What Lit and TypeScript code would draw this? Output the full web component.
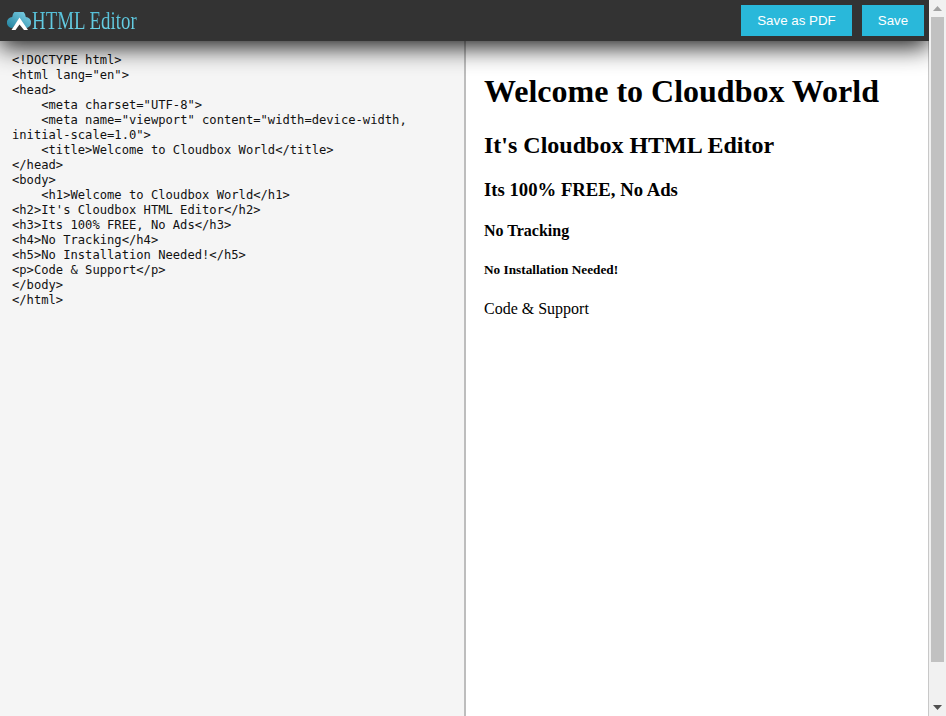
import { LitElement, html, css } from "lit";
import { customElement } from "lit/decorators.js";

const CODE = `<!DOCTYPE html>
<html lang="en">
<head>
    <meta charset="UTF-8">
    <meta name="viewport" content="width=device-width,
initial-scale=1.0">
    <title>Welcome to Cloudbox World</title>
</head>
<body>
    <h1>Welcome to Cloudbox World</h1>
<h2>It's Cloudbox HTML Editor</h2>
<h3>Its 100% FREE, No Ads</h3>
<h4>No Tracking</h4>
<h5>No Installation Needed!</h5>
<p>Code & Support</p>
</body>
</html>`;

@customElement("app-root")
export class AppRoot extends LitElement {
  static styles = css`
    :host { display: flex; width: 946px; height: 716px; overflow: hidden; background: #fff; }
    .page { flex: 1; min-width: 0; display: flex; flex-direction: column; }
    .bar {
      position: relative; z-index: 2;
      height: 41px; flex: none; background: #333;
      display: flex; align-items: flex-start; justify-content: space-between;
      box-shadow: 0 6px 24px rgba(0,0,0,.9);
    }
    .logo { display: flex; align-items: flex-start; height: 41px; padding: 12px 0 0 7px; box-sizing: border-box; gap: 1px; }
    .logo svg { display: block; flex: none; }
    .logo span {
      display: block; white-space: nowrap;
      font: 25px/18px "Liberation Serif", serif;
      padding-bottom: 3px;
      transform: scaleX(.755); transform-origin: left top;
      background: linear-gradient(#55bfd8, #6fd6ea);
      -webkit-background-clip: text; background-clip: text; color: transparent;
    }
    .actions { display: flex; gap: 10px; padding: 5px 5px 0 0; }
    button {
      height: 31px; border: 0; background: #29b8da; color: #fff; padding: 0;
      font: 13.33px "Liberation Sans", Arial, sans-serif;
    }
    .pdf { width: 111px; }
    .save { width: 62px; }
    .panes { flex: 1; min-height: 0; display: flex; }
    .code {
      width: 466px; flex: none; box-sizing: border-box; margin: 0;
      background: #f5f5f5; border-right: 2px solid #bdbdbd;
      padding: 12px 12px 0; overflow: hidden;
      font: 12.15px/15px "DejaVu Sans Mono", monospace; color: #111;
      white-space: pre-wrap;
    }
    .view { flex: 1; min-width: 0; padding: 11px 18px 0; color: #000; font-family: "Liberation Serif", "Times New Roman", serif; border-right: 1px solid #c8c8c8; }
    .view h1 { font-size: 32px; margin: 21.44px 0; }
    .view h2 { font-size: 24px; margin: 19.92px 0; }
    .view h3 { font-size: 18.72px; margin: 18.72px 0; }
    .view h4 { font-size: 16px; margin: 21.28px 0; }
    .view h5 { font-size: 13.28px; margin: 22.18px 0; }
    .view p { font-size: 16px; margin: 16px 0; }
    .scroll { position: relative; z-index: 3; width: 17px; flex: none; background: #f1f1f1; display: flex; flex-direction: column; }
    .arrow { height: 17px; flex: none; display: flex; align-items: center; justify-content: center; }
    .track { flex: 1; min-height: 0; padding: 0 2px; display: flex; flex-direction: column; }
    .thumb { height: 645px; background: #c1c1c1; }
  `;

  render() {
    return html`
      <div class="page">
        <header class="bar">
          <div class="logo">
            <svg width="24" height="18" viewBox="0 0 24 18" aria-hidden="true">
              <defs>
                <linearGradient id="lg" x1="0" y1="1" x2="1" y2="0">
                  <stop offset="0" stop-color="#1f7f9c"/><stop offset="1" stop-color="#8adcf0"/>
                </linearGradient>
              </defs>
              <path fill="url(#lg)" d="M5.500 16A5.500 5.500 0 0 1 5.200 5A6.800 6.800 0 0 1 18.800 5A5.500 5.500 0 0 1 18.500 16L12.500 7Z"/>
              <path fill="#fff" d="M12.500 5.500L21 18H17L12.500 12.500L8.500 18H4.500Z"/>
            </svg>
            <span>HTML Editor</span>
          </div>
          <div class="actions">
            <button class="pdf">Save as PDF</button>
            <button class="save">Save</button>
          </div>
        </header>
        <div class="panes">
          <pre class="code">${CODE}</pre>
          <div class="view">
            <h1>Welcome to Cloudbox World</h1>
            <h2>It's Cloudbox HTML Editor</h2>
            <h3>Its 100% FREE, No Ads</h3>
            <h4>No Tracking</h4>
            <h5>No Installation Needed!</h5>
            <p>Code &amp; Support</p>
          </div>
        </div>
      </div>
      <div class="scroll">
        <div class="arrow"><svg width="9" height="5" viewBox="0 0 9 5"><path fill="#a3a3a3" d="M4.500 0L9 5H0z"/></svg></div>
        <div class="track"><div class="thumb"></div></div>
        <div class="arrow"><svg width="9" height="5" viewBox="0 0 9 5"><path fill="#505050" d="M0 0h9L4.500 5z"/></svg></div>
      </div>
    `;
  }
}
